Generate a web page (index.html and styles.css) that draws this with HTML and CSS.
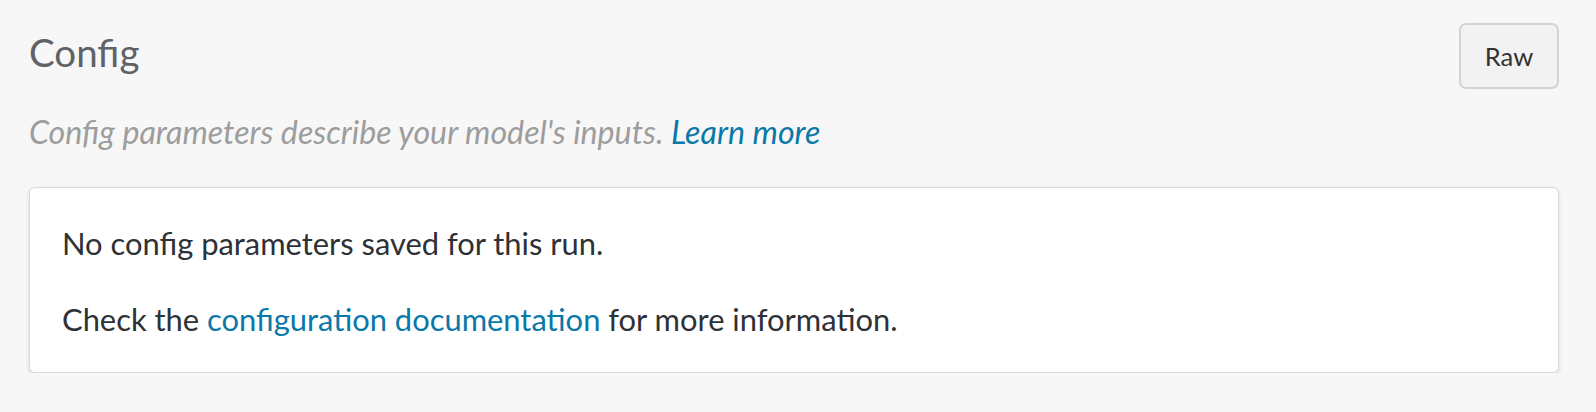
FILE: index.html
```html
<!DOCTYPE html>
<html lang="en">
  <head>
    <meta charset="UTF-8" />
    <meta name="viewport" content="width=device-width, initial-scale=1.0" />
    <title>Config</title>
    <link rel="stylesheet" href="styles.css">
  </head>
  <body>
    <div class="wrapper">
      <section class="header">
        <h1>Config</h1>
        <button class="raw-button">Raw</button>
      </section>
      <p class="subtitle">
        Config parameters describe your model's inputs.
        <a href="#">Learn more</a>
      </p>
      <section class="card">
        <p>No config parameters saved for this run.</p>
        <p>
          Check the <a href="#">configuration documentation</a> for more
          information.
        </p>
      </section>
    </div>
  </body>
</html>
```
FILE: styles.css
```css
* {
  margin: 0;
  padding: 0;
  box-sizing: border-box;
}
body {
  background-color: #f7f7f7;
  font-family: Lato, "Noto Sans", sans-serif;
  color: #2e3136;
}
a {
  color: #0a78a8;
  text-decoration: none;
}
.wrapper {
  padding: 23px 37px 0 29px;
}
.header {
  display: flex;
  justify-content: space-between;
  align-items: flex-start;
}
.header h1 {
  margin-top: 6px;
  font-size: 38.5px;
  line-height: 46px;
  font-weight: normal;
  color: #5f6266;
}
.raw-button {
  width: 100px;
  height: 66px;
  background-color: #f2f2f2;
  border: 2px solid #d3d3d3;
  border-radius: 7px;
  font-family: inherit;
  font-size: 25.5px;
  color: #333;
  cursor: pointer;
}
.raw-button:hover {
  background-color: #e8e8e8;
}
.subtitle {
  margin-top: 23px;
  font-size: 32.2px;
  line-height: 40px;
  font-style: italic;
  color: #9d9d9d;
}
.card {
  margin-top: 35px;
  padding: 36px 32px 32px;
  background-color: white;
  border: 1px solid #dadada;
  border-radius: 6px;
  box-shadow: 0 2px 4px rgba(0, 0, 0, 0.13);
}
.card p {
  font-size: 30.9px;
  line-height: 40px;
}
.card p + p {
  margin-top: 36px;
}
```
